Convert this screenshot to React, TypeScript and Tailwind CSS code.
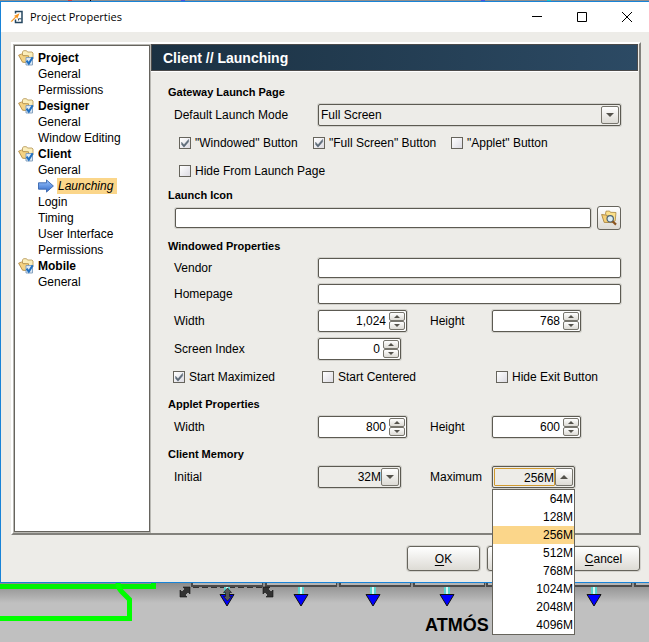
import React, { useState } from "react";

const fieldBorder = "border border-[#5c5a52] rounded-[2px] shadow-[0_0_0_1px_#d2d1cc]";
const buttonFace = "bg-linear-to-b from-white to-[#dddbd5]";

function FolderIcon() {
  return (
    <svg viewBox="0 0 16 16" className="size-4 shrink-0" aria-hidden="true">
      <path d="M4.500 5V2l1-1.300h3l1 1.300h4.500L15 3v6l-4 3.500z" fill="#fbeebb" stroke="#b3924f" strokeWidth=".8" />
      <path d="M.6 5.200 3.500 4l1.700 1.600 5.300.2.800 7-6.800-.6z" fill="#f4d283" stroke="#a8813a" strokeWidth=".8" />
      <path d="M8 7.500h6.500V15H8z" fill="#dbe8f4" stroke="#7f9cba" strokeWidth=".9" />
      <path d="m8.600 10.600 2.200 3 3.900-6.400" fill="none" stroke="#1f6fc0" strokeWidth="2" />
    </svg>
  );
}

function BrowseIcon() {
  return (
    <svg viewBox="0 0 16 16" className="size-4" aria-hidden="true">
      <path d="M4.500 4 5 1.200l3.600-.2.800 1.300 5.600.2-.8 8.300-3 1.400z" fill="#fbe08a" stroke="#a98640" strokeWidth=".8" />
      <path d="M.6 4.500 4.600 5l1.200 1 5 .4 1 6.200-8.600-.2z" fill="#f5cf75" stroke="#a07a34" strokeWidth=".8" />
      <circle cx="9.200" cy="8.800" r="3.200" fill="#dceef5" stroke="#4f6473" strokeWidth="1.200" />
      <path d="m11.600 11.200 3.400 3.400" stroke="#8a5420" strokeWidth="2.200" />
    </svg>
  );
}

function ArrowIcon() {
  return (
    <svg viewBox="0 0 16 14" className="h-[14px] w-4 shrink-0" aria-hidden="true">
      <defs>
        <linearGradient id="arrowBlue" x1="0" y1="0" x2="0" y2="1">
          <stop offset="0" stopColor="#9cc6ff" />
          <stop offset="1" stopColor="#2f68c8" />
        </linearGradient>
      </defs>
      <path d="M.5 3.800h8V.9L15.400 7l-6.900 6.100v-2.900h-8z" fill="url(#arrowBlue)" stroke="#3765ae" strokeWidth=".9" />
    </svg>
  );
}

function Triangle({ up = false, small = false }: { up?: boolean; small?: boolean }) {
  return (
    <svg viewBox="0 0 8 4" className={small ? "h-[3px] w-[6px]" : "h-1 w-2"} aria-hidden="true">
      <path d={up ? "M0 4h8L4 0z" : "M0 0h8L4 4z"} fill="#55534c" />
    </svg>
  );
}

function Check({ label, checked = false }: { label: string; checked?: boolean }) {
  const [on, setOn] = useState(checked);
  return (
    <label className="flex items-center gap-1 whitespace-nowrap">
      <span className="grid size-3 shrink-0">
        <input
          type="checkbox"
          checked={on}
          onChange={() => setOn(!on)}
          className="col-start-1 row-start-1 size-3 appearance-none border border-[#66645c] bg-linear-to-br from-white to-[#dcdbe2]"
        />
        {on && (
          <svg viewBox="0 0 12 12" className="pointer-events-none col-start-1 row-start-1 size-3" aria-hidden="true">
            <path d="m2.600 5.200 2.400 2.600 4.600-5.400v2.400L5 10.200 2.600 7.600z" fill="#5d6b78" stroke="#5d6b78" strokeWidth=".5" />
          </svg>
        )}
      </span>
      {label}
    </label>
  );
}

function Spinner({ id, value, narrow = false }: { id: string; value: string; narrow?: boolean }) {
  return (
    <div className={`flex h-[22px] items-center bg-white pr-px ${fieldBorder} ${narrow ? "w-[83px]" : "w-[89px]"}`}>
      <input id={id} role="spinbutton" defaultValue={value} className="h-full w-0 grow bg-transparent pr-[3px] text-right outline-none" />
      <div className="flex w-4 flex-col">
        <button aria-label="Increase" className={`grid h-[9px] place-items-center rounded-[2px] border border-[#77756d] ${buttonFace}`}>
          <Triangle up small />
        </button>
        <button aria-label="Decrease" className={`grid h-[9px] place-items-center rounded-[2px] border border-[#77756d] ${buttonFace}`}>
          <Triangle small />
        </button>
      </div>
    </div>
  );
}

function Combo({ id, options, value, right = false, open = false, onToggle }: {
  id: string; options: string[]; value: string; right?: boolean; open?: boolean; onToggle?: () => void;
}) {
  return (
    <div className={`flex h-[22px] items-center bg-[#edece8] p-px ${fieldBorder} ${right ? "w-[83px]" : "w-full"}`}>
      <div className={`flex h-[18px] min-w-0 grow rounded-[1px] ${open ? "border border-[#d09a30]" : ""}`}>
        <select
          id={id}
          defaultValue={value}
          className={`h-full w-full appearance-none bg-transparent outline-none ${right ? "[text-align-last:right]" : "pl-px"}`}
        >
          {options.map((o) => <option key={o}>{o}</option>)}
        </select>
      </div>
      <button
        onClick={onToggle}
        aria-label="Show options"
        className={`grid size-[18px] shrink-0 place-items-center rounded-[2px] border border-[#77756d] ${buttonFace}`}
      >
        <Triangle up={open} />
      </button>
    </div>
  );
}

const groups = [
  { name: "Project", items: ["General", "Permissions"] },
  { name: "Designer", items: ["General", "Window Editing"] },
  { name: "Client", items: ["General", "Launching", "Login", "Timing", "User Interface", "Permissions"] },
  { name: "Mobile", items: ["General"] },
];

function Tree() {
  return (
    <nav className="mt-px mb-px ml-px w-[136px] shrink-0 border border-[#66645e] bg-white pt-1 pl-[3px] leading-4 shadow-[0_0_0_1px_#b9b8b3]">
      {groups.map((g) => (
        <div key={g.name}>
          <div className="flex h-4 items-center gap-1 font-bold">
            <FolderIcon />
            {g.name}
          </div>
          <ul className="pl-5">
            {g.items.map((item) => (
              <li key={item} className="flex h-4 items-center gap-[3px]">
                {item === "Launching" && <ArrowIcon />}
                <a href="#" className={item === "Launching" ? "bg-[#fbd68a] pr-1 pl-px italic" : ""}>{item}</a>
              </li>
            ))}
          </ul>
        </div>
      ))}
    </nav>
  );
}

const memory = ["64M", "128M", "256M", "512M", "768M", "1024M", "2048M", "4096M"];
const grid = "grid grid-cols-[144px_112px_62px_1fr] items-center pl-[23px] pr-[18px]";
const heading = "mb-px h-4 pl-[17px] text-[11px] leading-4 font-bold";
const textBox = `h-5 w-full bg-white px-1 outline-none ${fieldBorder}`;

function Form() {
  const [open, setOpen] = useState(true);
  const [max, setMax] = useState("256M");
  return (
    <form className="pt-[13px] pb-[42px]" onSubmit={(e) => e.preventDefault()}>
      <h2 className={heading}>Gateway Launch Page</h2>
      <div className={`${grid} h-7`}>
        <label htmlFor="mode">Default Launch Mode</label>
        <div className="col-span-3"><Combo id="mode" value="Full Screen" options={["Full Screen", "Windowed", "Applet"]} /></div>
      </div>
      <div className="grid h-7 grid-cols-[134px_138px_1fr] items-center pl-7">
        <Check label={'"Windowed" Button'} checked />
        <Check label={'"Full Screen" Button'} checked />
        <Check label={'"Applet" Button'} />
      </div>
      <div className="flex h-7 items-center pl-7">
        <Check label="Hide From Launch Page" />
      </div>

      <h2 className={`${heading} mt-0.5`}><label htmlFor="icon">Launch Icon</label></h2>
      <div className="flex h-7 items-center gap-[6px] pr-[18px] pl-6">
        <input id="icon" className={textBox} />
        <button aria-label="Browse" className={`grid size-6 shrink-0 place-items-center rounded-[3px] border border-[#66645c] ${buttonFace}`}>
          <BrowseIcon />
        </button>
      </div>

      <h2 className={`${heading} mt-1.5`}>Windowed Properties</h2>
      <div className={`${grid} h-[26px]`}>
        <label htmlFor="vendor">Vendor</label>
        <div className="col-span-3 flex"><input id="vendor" className={textBox} /></div>
      </div>
      <div className={`${grid} h-[26px]`}>
        <label htmlFor="homepage">Homepage</label>
        <div className="col-span-3 flex"><input id="homepage" className={textBox} /></div>
      </div>
      <div className={`${grid} h-7`}>
        <label htmlFor="ww">Width</label>
        <Spinner id="ww" value="1,024" />
        <label htmlFor="wh">Height</label>
        <Spinner id="wh" value="768" />
      </div>
      <div className={`${grid} h-7`}>
        <label htmlFor="screen">Screen Index</label>
        <Spinner id="screen" value="0" narrow />
      </div>
      <div className="grid h-7 grid-cols-[149px_174px_1fr] items-center pl-[22px]">
        <Check label="Start Maximized" checked />
        <Check label="Start Centered" />
        <Check label="Hide Exit Button" />
      </div>

      <h2 className={`${heading} mt-[5px]`}>Applet Properties</h2>
      <div className={`${grid} h-7`}>
        <label htmlFor="aw">Width</label>
        <Spinner id="aw" value="800" />
        <label htmlFor="ah">Height</label>
        <Spinner id="ah" value="600" />
      </div>

      <h2 className={`${heading} mt-[5px]`}>Client Memory</h2>
      <div className={`${grid} h-7`}>
        <label htmlFor="initial">Initial</label>
        <Combo id="initial" value="32M" options={["32M", ...memory]} right />
        <label htmlFor="maximum">Maximum</label>
        <div className="relative w-[83px]">
          <Combo key={max} id="maximum" value={max} options={memory} right open={open} onToggle={() => setOpen(!open)} />
          {open && (
            <ul role="listbox" aria-label="Maximum" className="absolute top-full left-0 z-20 mt-px w-full border border-[#66645c] bg-white">
              {memory.map((m) => (
                <li
                  key={m}
                  role="option"
                  aria-selected={m === max}
                  onClick={() => setMax(m)}
                  className={`h-[18px] pr-px text-right leading-[18px] ${m === max ? "bg-[#fbd68a]" : ""}`}
                >
                  {m}
                </li>
              ))}
            </ul>
          )}
        </div>
      </div>
    </form>
  );
}

function DialogButton({ label }: { label: string }) {
  return (
    <button className={`h-[25px] w-[73px] rounded-[3px] border border-[#66645c] shadow-[0_0_0_1px_#d2d1cc] ${buttonFace}`}>
      <span className="underline underline-offset-2">{label[0]}</span>{label.slice(1)}
    </button>
  );
}

function Canvas() {
  const boxes = [191, 265, 339, 413, 486, 560, 634];
  const pumps = [227, 301, 373, 447, 520, 594];
  return (
    <div className="h-[59px] overflow-hidden bg-linear-to-b from-[#8c8c8c] to-[#c0c0c0] to-[20px]">
      <svg width="720" height="59" viewBox="0 0 720 59" className="max-w-none">
        <path d="M0 3.500H153.500V0" fill="none" stroke="#00f400" strokeWidth="5" />
        <path d="M0 35.500H129.500V16.500L122 9Q118 5 118 0" fill="none" stroke="#00ff00" strokeWidth="5" />
        {boxes.map((x) => (
          <g key={x}>
            <rect x={x} y="-2" width="72" height="6" fill="#4a4a4a" />
            <path d={`M${x + 2} 2V0h69v2z`} fill="#b4b4b4" />
          </g>
        ))}
        <path d="M193 4.500H263" stroke="#333" strokeDasharray="6 3" />
        {pumps.map((x) => (
          <g key={x}>
            <rect x={x - 3} y="4" width="6" height="8" fill="#5cd3cd" />
            <rect x={x - 1} y="4" width="2" height="8" fill="#d8f7f4" />
            <path d={`M${x - 7} 11.500H${x + 7}L${x} 23z`} fill="#0000ff" stroke="#111" />
          </g>
        ))}
        <g fill="#333" stroke="#111" strokeWidth=".6">
          <path d="M190 4v7l-2-2-3 3 2 2h-7V7l2 2 3-3-2-2z" />
          <path d="M263 4v7l2-2 3 3-2 2h7V7l-2 2-3-3 2-2z" />
          <path d="m227.500 5 4 4.500h-2v4h2l-4 4.500-4-4.500h2v-4h-2z" fill="#555" />
        </g>
        <text x="425" y="48" fontSize="18" fontWeight="bold" fill="#000">ATMÓS</text>
      </svg>
    </div>
  );
}

export default function App() {
  return (
    <div className="overflow-hidden bg-[#c0c0c0] font-['Liberation_Sans',Arial,sans-serif] text-[12px] text-black">
      <div className="flex h-px bg-[#8e8e8e]">
        <div className="ml-[68px] w-1 bg-[#d04040]" />
        <div className="ml-[18px] w-px bg-black" />
        <div className="ml-[90px] w-1 bg-[#5050e0]" />
        <div className="ml-[296px] w-1 bg-[#5050e0]" />
        <div className="ml-[62px] w-1 bg-[#20c8c0]" />
      </div>
      <div role="dialog" aria-label="Project Properties" className="relative z-10 border-y border-l border-[#1883d7] bg-[#edece8]">
        <header className="flex h-[30px] items-center bg-white">
          <svg viewBox="0 0 14 14" className="ml-[9px] size-[14px]" aria-hidden="true">
            <path d="M5.500 3.500V1.500h6.500v11H5.500v-3" fill="none" stroke="#24465f" strokeWidth="1.500" />
            <path d="M8.500 10.500V8.800h3" fill="none" stroke="#24465f" />
            <path d="m.5 11.500 5-5-1.700-.6 5.700-2.600-2.300 5.600-.9-1.600-4.300 4.500z" fill="#f7941e" />
          </svg>
          <h1 className="ml-[6px] grow font-['Open_Sans',sans-serif] text-[11px]">Project Properties</h1>
          <button aria-label="Minimize" className="grid h-full w-[45px] place-items-center">
            <svg width="10" height="10" viewBox="0 0 10 10"><path d="M0 4.500h10" stroke="#000" /></svg>
          </button>
          <button aria-label="Maximize" className="grid h-full w-[45px] place-items-center">
            <svg width="10" height="10" viewBox="0 0 10 10"><path d="M.5.500h9v9h-9z" fill="none" stroke="#000" /></svg>
          </button>
          <button aria-label="Close" className="grid h-full w-[45px] place-items-center">
            <svg width="10" height="10" viewBox="0 0 10 10"><path d="m0 0 10 10M10 0 0 10" stroke="#000" /></svg>
          </button>
        </header>
        <main className="mt-[10px] mr-2 ml-[10px] flex border-2 border-t-white border-r-[#82817c] border-b-[#82817c] border-l-white">
          <Tree />
          <section className="ml-px min-w-0 grow">
            <h2 className="mr-px h-[27px] border border-[#4b4b4b] bg-linear-to-r from-[#1b3142] to-[#2c4a64] pl-[11px] text-[14px] leading-[27px] font-bold text-white shadow-[0_1px_0_#fff]">
              Client // Launching
            </h2>
            <Form />
          </section>
        </main>
        <footer className="flex justify-end gap-[7px] py-[11px] pr-[9px]">
          <DialogButton label="OK" />
          <DialogButton label="Apply" />
          <DialogButton label="Cancel" />
        </footer>
      </div>
      <Canvas />
    </div>
  );
}
